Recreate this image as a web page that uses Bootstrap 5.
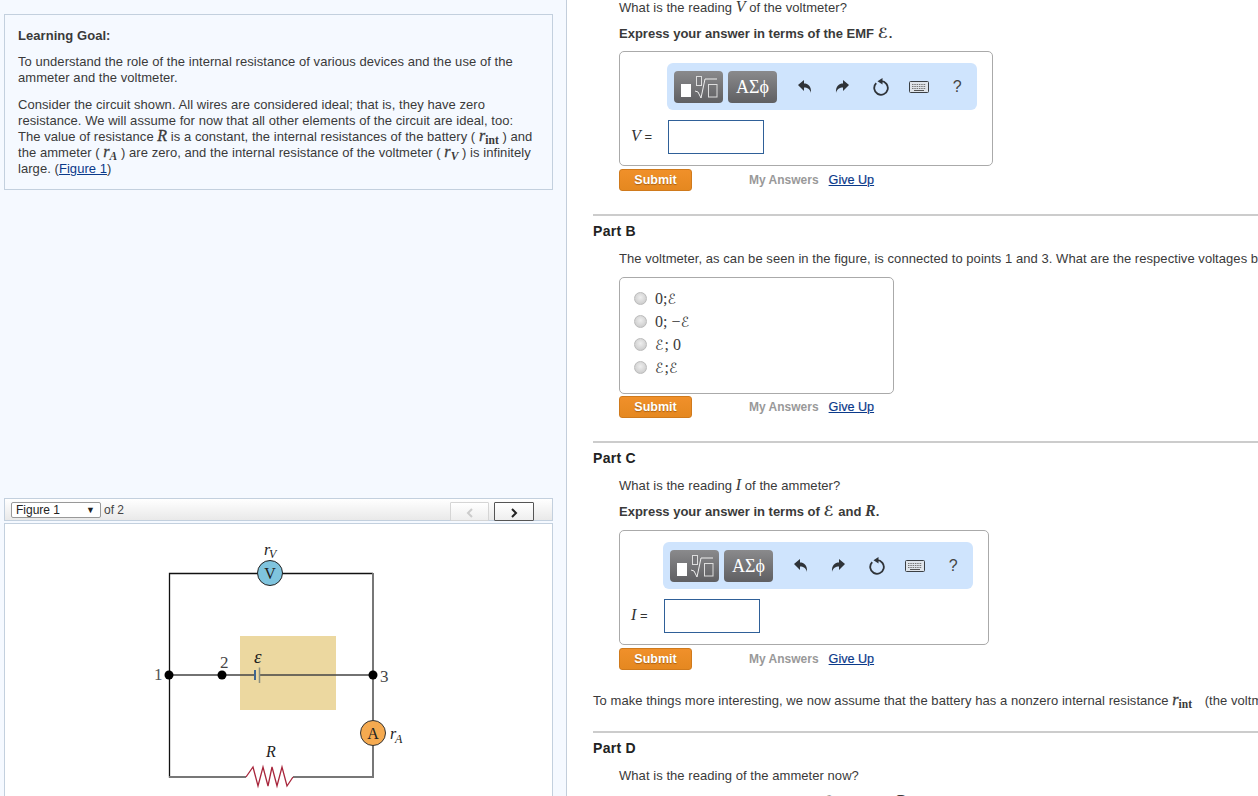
<!DOCTYPE html>
<html lang="en">
<head>
    <meta charset="UTF-8">
    <title>Internal resistance</title>
    <link href="https://cdn.jsdelivr.net/npm/bootstrap@5.3.0/dist/css/bootstrap.min.css" rel="stylesheet">
    <style>
        html, body { height: 796px; overflow: hidden; }
        body { font-family: "Liberation Sans", Arial, sans-serif; font-size: 13px; letter-spacing: .055px; line-height: 16px; color: #3a3a3a; background: #fff; }
        .m-font { font-family: "Liberation Serif", serif; font-size: 16px; line-height: 16px; }
        .m-var { font-family: "Liberation Serif", serif; font-style: italic; font-size: 16px; line-height: 0; }
        .m-heavy { -webkit-text-stroke: .3px currentColor; }
        .m-sub { font-family: "Liberation Serif", serif; font-size: 11.5px; line-height: 0; position: relative; top: 3px; }
        .sub-gap { margin-right: 9px; }
        .script-e { font-family: "DejaVu Sans", sans-serif; font-size: 14px; line-height: 0; padding-right: 1px; }

        .left-pane { width: 567px; height: 796px; flex: none; background: #f5f9ff; border-right: 1px solid #c3cedb; padding: 14px 13px 0 4px; }
        .goal-box { height: 176px; border: 1px solid #c3d0de; padding: 13px 13px; margin-bottom: 308px; }
        .goal-box h2 { font-size: 13px; line-height: 16px; font-weight: bold; margin: 0 0 10px; }
        .goal-box p { margin: 0 0 11px; width: 518px; }
        .goal-box a, .give-up { color: #0b3a8a; text-decoration: underline; }
        .fig-bar { height: 23px; border: 1px solid #c3d0de; background: linear-gradient(#fff, #e9e9e9); padding: 3px 18px 0 6px; font-size: 12px; letter-spacing: 0; color: #444; }
        .fig-pick { width: 90px; height: 16px; background: #fff; border: 1px solid #999; border-radius: 2px; padding: 0 5px 0 4px; color: #222; line-height: 14px; }
        .fig-pick i { font-style: normal; font-size: 9px; }
        .of-count { margin-left: 3px; }
        .fig-nav { width: 39px; height: 19px; padding: 0; border-radius: 1px; border: 1px solid #555; background: linear-gradient(#fff, #eee); line-height: 15px; }
        .fig-nav.is-off { border-color: #d5d5d5; }
        .fig-nav.is-next { width: 40px; margin-left: 5px; }
        .fig-box { height: 280px; margin-top: 2px; border: 1px solid #c3d0de; background: #fff; }

        .right-pane { flex: 1 1 0; min-width: 0; height: 796px; overflow: hidden; padding: 0 0 0 26px; white-space: nowrap; }
        .in-part { padding-left: 26px; }
        .q-line { height: 16px; margin: 0; }
        .q-bold { font-weight: bold; letter-spacing: 0; }
        .part-rule { height: 2px; background: #ccc; border: 0; opacity: 1; margin: 0; }
        .part-name { font-weight: bold; font-size: 14px; letter-spacing: .3px; line-height: 16px; margin: 0; color: #222; }
        .answer-box { width: 374px; height: 115px; border: 1px solid #aaa; border-radius: 5px; background: #fff; padding: 11px 15px 0 48px; }
        .answer-box.is-narrow { width: 370px; }
        .tool-strip { width: 310px; height: 47px; margin-left: -1px; background: #cfe4fd; border-radius: 6px; padding: 0 7px; }
        .tool-dark { width: 49px; height: 32px; flex: none; padding: 0; border: 0; border-radius: 4px; background: linear-gradient(#8a8a8c, #5f5f62); color: #fff; font-family: "Liberation Serif", serif; font-size: 18px; letter-spacing: 0; line-height: 32px; }
        .tool-dark + .tool-dark { margin-left: 5px; }
        .tool-icon { width: 38.3px; flex: none; text-align: center; color: #444; font-size: 16px; line-height: 18px; }
        .tool-dark + .tool-icon { margin-left: 8px; }
        .tool-icon svg { display: block; margin: 0 auto; }
        .ans-input { width: 96px; height: 34px; border: 1px solid #2f6098; border-radius: 0; padding: 0; }
        .ans-label { width: 37px; margin-left: -37px; color: #333; }
        .is-narrow .tool-strip { margin-left: -5px; }
        .is-narrow .ans-label { width: 33px; margin-left: -37px; }
        .submit-btn { width: 73px; height: 22px; padding: 0; background: linear-gradient(#f0902a, #e58820); border: 1px solid #d07a1c; border-radius: 3px; color: #fff; font-weight: bold; font-size: 12.5px; letter-spacing: 0; line-height: 19px; text-shadow: 0 1px 1px #a85f10; }
        .my-ans { font-weight: bold; color: #999; font-size: 12px; letter-spacing: 0; margin-left: 57px; margin-right: 10px; }
        .give-up { font-size: 12.6px; letter-spacing: 0; -webkit-text-stroke: .2px #0b3a8a; }
        .choice-box { width: 275px; height: 117px; border: 1px solid #aaa; border-radius: 5px; padding: 9px 0 0 14px; }
        .choice-row { height: 23px; }
        .choice-dot { width: 13px; height: 13px; border-radius: 50%; border: 1px solid #bbb; background: radial-gradient(circle at 50% 40%, #eee, #c4c4c4); margin-right: 8px; }

        .gap-a { margin-top: 10px; }
        .gap-b { margin-top: 9px; }
        .gap-b2 { margin-top: 10px; }
        .gap-c { margin-top: 3px; }
        .gap-d { margin-top: 23px; }
        .gap-e { margin-top: 7px; }
        .gap-f { margin-top: 12px; }
        .gap-f2 { margin-top: 12px; }
        .gap-g { margin-top: 10px; }
        .gap-h { margin-top: 2px; }
        .gap-j { margin-top: 23px; }
        .gap-k { margin-top: 22px; }
        .input-row { margin-top: 10px; }
    </style>
</head>

<body>
    <div class="d-flex">
        <div class="left-pane">
            <div class="goal-box">
                <h2>Learning Goal:</h2>
                <p>To understand the role of the internal resistance of various devices and the use of the ammeter and the voltmeter.</p>
                <p>Consider the circuit shown. All wires are considered ideal; that is, they have zero resistance. We will assume for now that all other elements of the circuit are ideal, too: The value of resistance <span class="m-var m-heavy">R</span> is a constant, the internal resistances of the battery ( <span class="m-var m-heavy">r</span><span class="m-sub fw-bold">int</span> ) and the ammeter ( <span class="m-var m-heavy">r</span><span class="m-sub fst-italic fw-bold">A</span> ) are zero, and the internal resistance of the voltmeter ( <span class="m-var m-heavy">r</span><span class="m-sub fst-italic fw-bold">V</span> ) is infinitely large. (<a href="#">Figure 1</a>)</p>
            </div>

            <div class="fig-bar d-flex align-items-start">
                <div class="fig-pick d-flex justify-content-between align-items-center"><span>Figure 1</span><i>▼</i></div>
                <span class="of-count">of 2</span>
                <button class="btn fig-nav is-off ms-auto" type="button">
                    <svg width="8" height="10" viewBox="0 0 8 10"><path d="M6 1 2 5l4 4" fill="none" stroke="#ccc" stroke-width="2"/></svg>
                </button>
                <button class="btn fig-nav is-next" type="button">
                    <svg width="8" height="10" viewBox="0 0 8 10"><path d="M2 1l4 4-4 4" fill="none" stroke="#222" stroke-width="2"/></svg>
                </button>
            </div>
            <div class="fig-box">
                <svg class="d-block" width="547" height="272" viewBox="5 524 547 272" font-family="Liberation Serif, serif" fill="#222">
                    <rect x="240" y="636" width="96" height="74" fill="#ecd8a0"/>
                    <path d="M270 573.500H169.500V777H246" fill="none" stroke="#111" stroke-width="1.300"/>
                    <path d="M270 573.500H373" fill="none" stroke="#111" stroke-width="1.300"/>
                    <path d="M373 573V777H293" fill="none" stroke="#777" stroke-width="2"/>
                    <path d="M246 777H169" fill="none" stroke="#777" stroke-width="2"/>
                    <path d="M169 675H255M260 675H373" fill="none" stroke="#444" stroke-width="1.300"/>
                    <path d="M255 670V680" stroke="#3f6690" stroke-width="2"/>
                    <path d="M259.500 667.500V683" stroke="#8a8f80" stroke-width="1.500"/>
                    <path d="M246 777 253 767 258 786 263 767 268 786 272 767 277 786 282 767 287 786 293 777" fill="none" stroke="#a8263c" stroke-width="1.300"/>
                    <circle cx="169" cy="675" r="4.500" fill="#000"/>
                    <circle cx="222" cy="675" r="4.500" fill="#000"/>
                    <circle cx="373" cy="675" r="4.500" fill="#000"/>
                    <circle cx="270" cy="573" r="12.500" fill="#7fc4de" stroke="#222" stroke-width="1"/>
                    <circle cx="373" cy="733" r="12.500" fill="#f5aa50" stroke="#333" stroke-width="1"/>
                    <text x="270" y="578.500" text-anchor="middle" font-size="16">V</text>
                    <text x="373" y="738.500" text-anchor="middle" font-size="16">A</text>
                    <text x="264" y="555" font-size="16" font-style="italic">r</text>
                    <text x="269" y="558" font-size="12" font-style="italic">V</text>
                    <text x="390" y="739" font-size="16" font-style="italic">r</text>
                    <text x="395" y="743" font-size="12" font-style="italic">A</text>
                    <text x="154" y="680" font-size="17" fill="#555">1</text>
                    <text x="220" y="668" font-size="17" fill="#444">2</text>
                    <text x="380" y="682" font-size="17" fill="#444">3</text>
                    <text x="254" y="663" font-size="19" font-style="italic">ε</text>
                    <text x="271" y="757" text-anchor="middle" font-size="16" font-style="italic">R</text>
                </svg>
            </div>
        </div>

        <div class="right-pane">
            <div class="in-part">
                <p class="q-line">What is the reading <span class="m-var">V</span> of the voltmeter?</p>
                <p class="q-line q-bold gap-a">Express your answer in terms of the EMF <span class="script-e">ℰ</span>.</p>
                <div class="answer-box gap-b">
                    <div class="tool-strip d-flex align-items-center">
                        <button class="btn tool-dark" type="button"><svg class="d-block" width="49" height="32" viewBox="0 0 49 32"><rect x="7" y="13" width="10" height="13" fill="#fff"/><path d="M21 20l3 1 3 6 4-19h12" fill="none" stroke="#eee" stroke-width="1"/><rect x="22.500" y="5.500" width="5" height="9" fill="#77777a" stroke="#ddd"/><rect x="34.500" y="13.500" width="8.500" height="12.500" fill="none" stroke="#ddd"/></svg></button>
                        <button class="btn tool-dark" type="button">ΑΣϕ</button>
                        <div class="tool-icon"><svg width="15" height="16" viewBox="0 0 15 16"><path d="M1 6 7 1v3.500c4 0 7.500 2.500 7 9.500-1-4-3.500-5.500-7-5.500V12z" fill="#2f3338"/></svg></div>
                        <div class="tool-icon"><svg width="15" height="16" viewBox="0 0 15 16"><path d="M14 6 8 1v3.500c-4 0-7.500 2.500-7 9.500 1-4 3.500-5.500 7-5.500V12z" fill="#2f3338"/></svg></div>
                        <div class="tool-icon"><svg width="18" height="18" viewBox="0 0 18 18"><path d="M9 3.200A6.800 6.800 0 1 1 4.200 5.200" fill="none" stroke="#2f3338" stroke-width="1.800"/><path d="M5.500 3.200 10.500 0v6.500z" fill="#2f3338"/></svg></div>
                        <div class="tool-icon"><svg width="20" height="12" viewBox="0 0 20 12"><rect x=".5" y=".5" width="19" height="11" rx="1" fill="#dfe4ea" stroke="#3a3f44"/><path d="M3 3.500h14M3 5.500h14M3 7.500h14" stroke="#777" stroke-dasharray="1.500 .8"/><path d="M5 9.500h10" stroke="#555"/></svg></div>
                        <div class="tool-icon">?</div>
                    </div>
                    <div class="d-flex align-items-center input-row">
                        <span class="ans-label"><span class="m-var">V</span> =</span>
                        <input class="form-control ans-input" type="text">
                    </div>
                </div>
                <div class="d-flex align-items-center gap-c">
                    <button class="btn submit-btn" type="button">Submit</button>
                    <span class="my-ans">My Answers</span><a class="give-up" href="#">Give Up</a>
                </div>
            </div>

            <hr class="part-rule gap-d">
            <p class="part-name gap-e">Part B</p>
            <div class="in-part">
                <p class="q-line gap-f">The voltmeter, as can be seen in the figure, is connected to points 1 and 3. What are the respective voltages between points 1 and 2 and between points 2 and 3?</p>
                <div class="choice-box gap-g">
                    <div class="choice-row d-flex align-items-center"><span class="choice-dot"></span><span class="m-font">0;<span class="script-e">ℰ</span></span></div>
                    <div class="choice-row d-flex align-items-center"><span class="choice-dot"></span><span class="m-font">0; −<span class="script-e">ℰ</span></span></div>
                    <div class="choice-row d-flex align-items-center"><span class="choice-dot"></span><span class="m-font"><span class="script-e">ℰ</span>; 0</span></div>
                    <div class="choice-row d-flex align-items-center"><span class="choice-dot"></span><span class="m-font"><span class="script-e">ℰ</span>;<span class="script-e">ℰ</span></span></div>
                </div>
                <div class="d-flex align-items-center gap-h">
                    <button class="btn submit-btn" type="button">Submit</button>
                    <span class="my-ans">My Answers</span><a class="give-up" href="#">Give Up</a>
                </div>
            </div>

            <hr class="part-rule gap-d">
            <p class="part-name gap-e">Part C</p>
            <div class="in-part">
                <p class="q-line gap-f2">What is the reading <span class="m-var">I</span> of the ammeter?</p>
                <p class="q-line q-bold gap-a">Express your answer in terms of <span class="script-e">ℰ</span> and <span class="m-var">R</span>.</p>
                <div class="answer-box is-narrow gap-b2">
                    <div class="tool-strip d-flex align-items-center">
                        <button class="btn tool-dark" type="button"><svg class="d-block" width="49" height="32" viewBox="0 0 49 32"><rect x="7" y="13" width="10" height="13" fill="#fff"/><path d="M21 20l3 1 3 6 4-19h12" fill="none" stroke="#eee" stroke-width="1"/><rect x="22.500" y="5.500" width="5" height="9" fill="#77777a" stroke="#ddd"/><rect x="34.500" y="13.500" width="8.500" height="12.500" fill="none" stroke="#ddd"/></svg></button>
                        <button class="btn tool-dark" type="button">ΑΣϕ</button>
                        <div class="tool-icon"><svg width="15" height="16" viewBox="0 0 15 16"><path d="M1 6 7 1v3.500c4 0 7.500 2.500 7 9.500-1-4-3.500-5.500-7-5.500V12z" fill="#2f3338"/></svg></div>
                        <div class="tool-icon"><svg width="15" height="16" viewBox="0 0 15 16"><path d="M14 6 8 1v3.500c-4 0-7.500 2.500-7 9.500 1-4 3.500-5.500 7-5.500V12z" fill="#2f3338"/></svg></div>
                        <div class="tool-icon"><svg width="18" height="18" viewBox="0 0 18 18"><path d="M9 3.200A6.800 6.800 0 1 1 4.200 5.200" fill="none" stroke="#2f3338" stroke-width="1.800"/><path d="M5.500 3.200 10.500 0v6.500z" fill="#2f3338"/></svg></div>
                        <div class="tool-icon"><svg width="20" height="12" viewBox="0 0 20 12"><rect x=".5" y=".5" width="19" height="11" rx="1" fill="#dfe4ea" stroke="#3a3f44"/><path d="M3 3.500h14M3 5.500h14M3 7.500h14" stroke="#777" stroke-dasharray="1.500 .8"/><path d="M5 9.500h10" stroke="#555"/></svg></div>
                        <div class="tool-icon">?</div>
                    </div>
                    <div class="d-flex align-items-center input-row">
                        <span class="ans-label"><span class="m-var">I</span> =</span>
                        <input class="form-control ans-input" type="text">
                    </div>
                </div>
                <div class="d-flex align-items-center gap-c">
                    <button class="btn submit-btn" type="button">Submit</button>
                    <span class="my-ans">My Answers</span><a class="give-up" href="#">Give Up</a>
                </div>
            </div>

            <p class="q-line gap-j">To make things more interesting, we now assume that the battery has a nonzero internal resistance <span class="m-var m-heavy">r</span><span class="m-sub fw-bold sub-gap">int</span> (the voltmeter and the ammeter are still ideal).</p>
            <hr class="part-rule gap-k">
            <p class="part-name gap-e">Part D</p>
            <div class="in-part">
                <p class="q-line gap-f">What is the reading of the ammeter now?</p>
                <p class="q-line q-bold gap-a">Express your answer in terms of <span class="script-e">ℰ</span>, <span class="m-var">r</span><span class="m-sub">int</span>, and <span class="m-var">R</span>.</p>
            </div>
        </div>
    </div>
    <script src="https://cdn.jsdelivr.net/npm/bootstrap@5.3.0/dist/js/bootstrap.bundle.min.js"></script>
</body>
</html>
